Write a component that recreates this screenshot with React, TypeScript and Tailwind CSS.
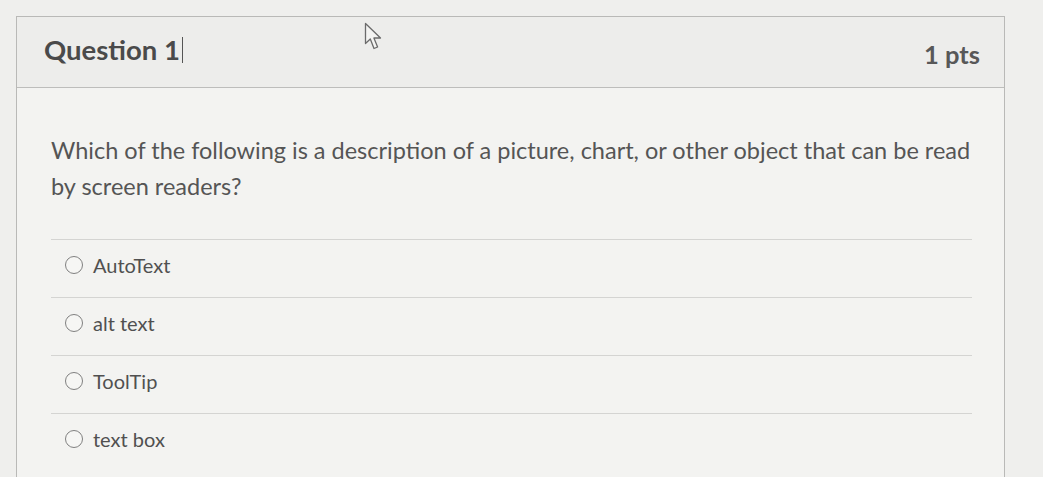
import React from "react";

const answers = ["AutoText", "alt text", "ToolTip", "text box"];

function Cursor() {
  return (
    <svg width="20" height="29" viewBox="0 0 20 29" className="absolute left-[364px] top-[22px]">
      <path
        d="M1.5 1.5 L1.5 21.5 L6.3 17 L10 26.5 L13.6 25 L9.9 16 L16.5 16 Z"
        fill="#f4f4f2"
        stroke="#6b6b6b"
        strokeWidth="1.3"
        strokeLinejoin="round"
      />
    </svg>
  );
}

export default function App() {
  return (
    <div
      className="relative min-h-[477px] w-[1043px] overflow-hidden bg-[#efefed] pl-[16px] pt-[16px]"
      style={{ fontFamily: "Lato, 'Open Sans', sans-serif" }}
    >
      <div className="w-[989px] h-[480px] border border-[#b9b9b7] bg-[#f3f3f1]">
        <div className="flex h-[71px] items-center justify-between border-b border-[#bdbdbb] bg-[#ededeb] pl-[27px] pr-[24px]">
          <div className="flex items-center pb-[4px] text-[27.5px] font-bold text-[#4a4a4a]">
            <span>Question 1</span>
            <span className="ml-[2px] inline-block h-[26px] w-[1.5px] bg-[#555]" />
          </div>
          <div className="pt-[4px] text-[25.5px] font-bold text-[#585858]">1 pts</div>
        </div>
        <div className="pl-[34px] pr-[32px] pt-[44px]">
          <p className="text-[23.5px] leading-[36px] text-[#555]">
            Which of the following is a description of a picture, chart, or other object that can be read
            <br />
            by screen readers?
          </p>
          <div className="mt-[35px]">
            {answers.map((a) => (
              <div
                key={a}
                className="flex h-[58px] items-center border-t border-[#d4d4d2] pb-[8px] pl-[14px]"
              >
                <span className="inline-block h-[18px] w-[18px] rounded-full border-[1.5px] border-[#808080] bg-[#f6f6f4]" />
                <span className="ml-[10px] text-[20px] text-[#505050]">{a}</span>
              </div>
            ))}
          </div>
        </div>
      </div>
      <Cursor />
    </div>
  );
}
